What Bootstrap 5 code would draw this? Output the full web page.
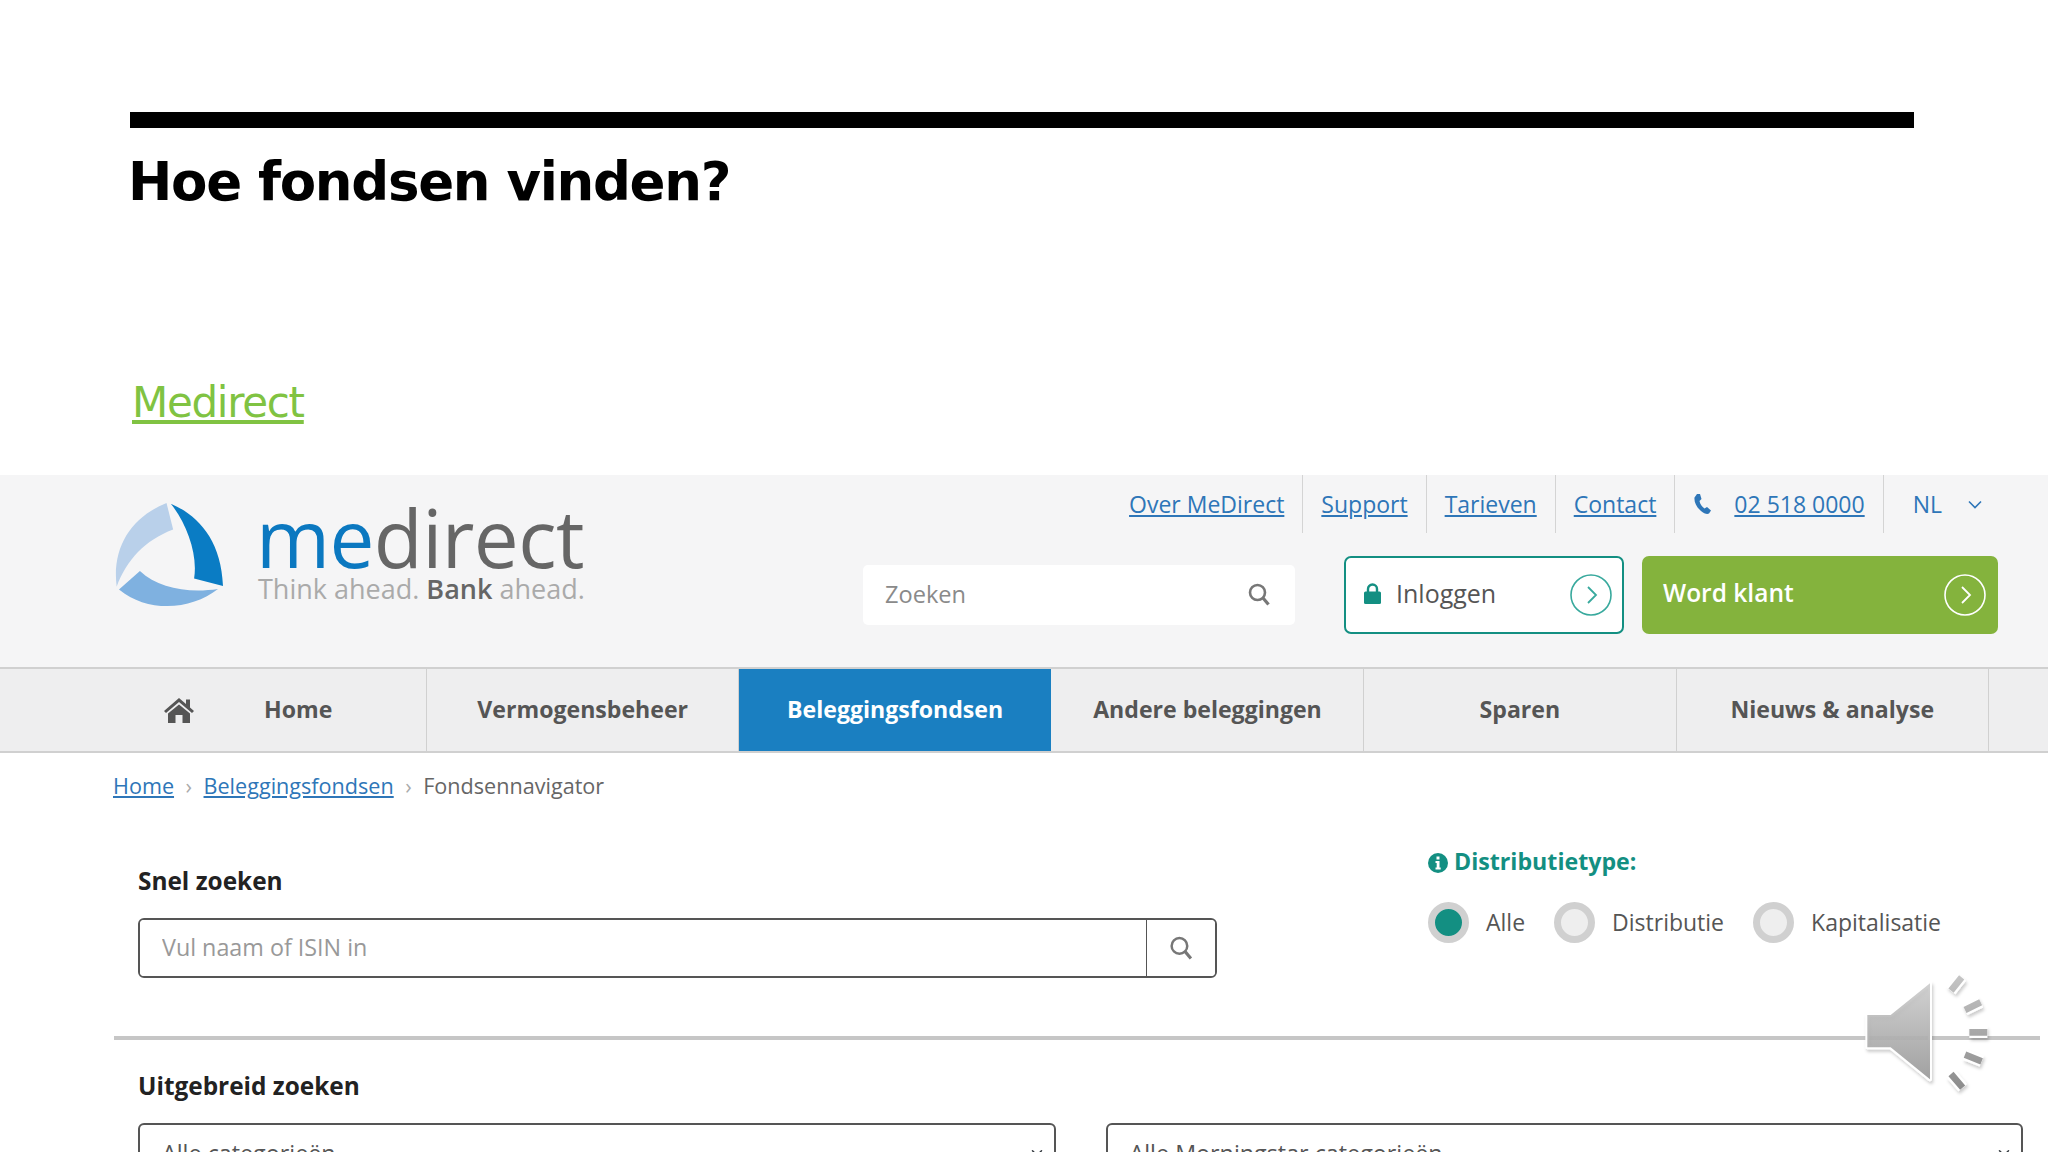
<!DOCTYPE html>
<html lang="nl">
<head>
<meta charset="utf-8">
<title>Hoe fondsen vinden?</title>
<link href="https://cdn.jsdelivr.net/npm/bootstrap@5.3.0/dist/css/bootstrap.min.css" rel="stylesheet">
<style>
html,body{height:1152px;overflow:hidden;background:#fff}
body{font-family:"Open Sans",sans-serif;color:#555;position:relative}
a{color:#2e76b8}
.slide-top{height:475px;padding:112px 0 0 130px}
.slide-bar{width:1784px;height:16px;background:#000}
.slide-title{font:700 53px/1 "DejaVu Sans",sans-serif;letter-spacing:-1.3px;color:#000;margin:27px 0 0 -2px}
.slide-link{display:inline-block;font:400 42px/1 "DejaVu Sans",sans-serif;letter-spacing:-1.3px;color:#80c342;margin:174px 0 0 2px}
.site-head{height:192px;background:#f5f5f6;padding:0 50px 0 113px}
.logo-mark{width:112px;height:108px;margin-top:26px}
.logo-box{margin-left:33px;margin-top:20px;width:336px}
.logo-word{font-size:80px;font-weight:500;line-height:84px;letter-spacing:-.6px;color:#666;white-space:nowrap;margin-left:-2px}
.logo-word span{color:#0b78c0}
.logo-tag{font-size:27px;line-height:24px;color:#aaa;white-space:nowrap;margin-top:-2px}
.logo-tag b{font-weight:600;color:#666}
.top-links{height:58px;font-size:23px}
.top-links>*{padding:0 18px;border-right:1px solid #d4d4d4;height:58px;line-height:58px;display:flex;align-items:center}
.top-links>:last-child{border:0;padding:0 16px 0 29px;color:#2e76b8}
.top-icon{width:19px;height:22px;margin-right:22px}
.chev{width:14px;height:9px;margin-left:26px}
.action-row{margin-top:23px;height:78px}
.find-box{width:432px;height:60px;background:#fff;border-radius:5px;padding:0 25px 0 22px;font-size:23.6px;color:#8a8a8a;margin-right:49px}
.cta{height:78px;border-radius:7px;font-size:24.5px;font-weight:600;text-align:left;padding:0 12px 3px 21px;display:flex;align-items:center}
.cta-login{width:280px;background:#fff;border:2px solid #138f82;color:#555;margin-right:18px;font-weight:400;padding-left:18px;padding-right:10px;font-size:25px}
.cta-login:hover{background:#fff;border-color:#138f82;color:#555}
.cta-new{width:356px;background:#84b33d;border:0;color:#fff}
.cta-new:hover{background:#84b33d;color:#fff}
.ring{width:42px;height:42px;margin-left:auto;margin-bottom:-3px}
.lock-ic{width:17px;height:21px;margin-right:15px}
.main-nav{height:86px;background:#eeeeef;border-top:2px solid #d0d0d0;border-bottom:2px solid #d0d0d0;flex-wrap:nowrap}
.main-nav .nav-link{width:312.4px;height:82px;display:flex;align-items:center;justify-content:center;color:#555;font-size:23.1px;font-weight:700;border-right:1px solid #d0d0d0;padding:0 0 1px;border-radius:0}
.main-nav .nav-link.active{background:#1a7fc1;color:#fff;border-right-color:#eeeeef}
.main-nav .home-cell{width:427px;justify-content:flex-start;padding-left:164px}
.home-ic{width:30px;height:26px;margin-right:70px}
.crumbs{padding:18px 0 0 113px;font-size:21.6px;line-height:30px}
.crumbs .breadcrumb{margin:0}
.crumbs .breadcrumb-item+.breadcrumb-item{padding-left:11.5px}
.crumbs .breadcrumb-item+.breadcrumb-item::before{content:"›";color:#aaa;padding-right:11.5px}
.crumbs .active{color:#666}
.quick-row{padding:45px 0 0 138px}
.quick-left{width:1079px;padding-top:20px}
.sec-title{font-size:24.4px;font-weight:700;line-height:30px;color:#222;margin:0}
.quick-group{margin-top:22px;height:60px;border:2px solid #555;border-radius:6px;overflow:hidden;background:#fff;flex-wrap:nowrap}
.quick-group .form-control{border:0;border-radius:0;font-size:23.3px;color:#555;padding:0 22px 2px;height:56px;box-shadow:none}
.form-control::placeholder{color:#999}
.quick-btn{width:69px;border:0;border-left:1px solid #555;border-radius:0;padding:0;background:#fff}
.quick-right{margin-left:211px}
.dist-title{font-size:23.2px;font-weight:700;line-height:30px;color:#138f82}
.dist-title svg{width:20px;height:20px;margin-right:6px;vertical-align:-3px}
.dist-opts{margin-top:26px;font-size:23px;color:#555}
.dist-opts .form-check{margin:0;padding:0;min-height:0;display:flex;align-items:center}
.dist-opts .form-check-input{width:41px;height:41px;margin:0 17px 0 0;float:none;background:#eee;background-image:none;border:7px solid #d0d0d0;box-shadow:none}
.dist-opts .form-check-input:checked{background:#138f82;background-image:none;border-color:#d0d0d0}
.dist-opts .form-check-label{line-height:41px}
.dist-opts .form-check+.form-check{margin-left:29px}
.rule{height:4px;background:#c6c6c6;margin:58px 8px 0 114px;opacity:1;border:0}
.more-wrap{padding:31px 25px 0 138px}
.more-selects{margin-top:22px;gap:50px}
.more-selects .form-select{width:918px;height:60px;border:2px solid #555;border-radius:6px;font-size:23.3px;color:#555;padding:6px 22px;background-position:right 9px center;background-size:16px 12px}
.speaker{position:absolute;left:1850px;top:960px;width:170px;height:150px}
</style>
</head>
<body>
<section class="slide-top">
  <div class="slide-bar"></div>
  <h1 class="slide-title">Hoe fondsen vinden?</h1>
  <a class="slide-link" href="#">Medirect</a>
</section>

<header class="site-head d-flex">
  <svg class="logo-mark flex-shrink-0" viewBox="35 32 335 325" aria-label="MeDirect logo">
    <path fill="#b9d0ea" d="M195 38 L215 118 C130 150 75 210 45 290 C30 170 90 80 195 38Z"/>
    <path fill="#0a7cc4" d="M208 40 C290 75 360 150 365 288 L278 265 C290 190 255 100 208 40Z"/>
    <path fill="#7fb1e0" d="M52 298 L115 243 C170 295 260 310 350 297 C270 360 140 370 52 298Z"/>
  </svg>
  <div class="logo-box flex-shrink-0">
    <div class="logo-word"><span>me</span>direct</div>
    <div class="logo-tag">Think ahead. <b>Bank</b> ahead.</div>
  </div>
  <div class="ms-auto">
    <div class="top-links d-flex justify-content-end">
      <a href="#">Over MeDirect</a>
      <a href="#">Support</a>
      <a href="#">Tarieven</a>
      <a href="#">Contact</a>
      <div>
        <svg class="top-icon" viewBox="0 0 19 22"><path fill="#2e76b8" d="M4 1 L7 1 L8.5 6 L6.5 8 C7 11 9 14 11.5 15.5 L14 14 L18 17.5 L16 20.5 C14 21.5 11 20.5 8 18 C3.5 14 1 9 1.5 4.5Z"/></svg>
        <a href="#">02 518 0000</a>
      </div>
      <div>NL
        <svg class="chev" viewBox="0 0 14 9"><path fill="none" stroke="#2e76b8" stroke-width="1.6" d="M1 1.5 L7 7.5 L13 1.5"/></svg>
      </div>
    </div>
    <div class="action-row d-flex align-items-center justify-content-end">
      <div class="find-box d-flex align-items-center justify-content-between">
        <span>Zoeken</span>
        <svg width="22" height="24" viewBox="0 0 22 24"><circle cx="9.5" cy="9.5" r="7.5" fill="none" stroke="#777" stroke-width="2.6"/><path stroke="#777" stroke-width="3.2" d="M15 15 L20.5 21.5"/></svg>
      </div>
      <button type="button" class="btn cta cta-login">
        <svg class="lock-ic" viewBox="0 0 17 21"><path fill="none" stroke="#138f82" stroke-width="2.4" d="M4 9 V6 a4.5 4.5 0 0 1 9 0 V9"/><rect y="8.5" width="17" height="12.5" rx="1.5" fill="#138f82"/></svg>
        Inloggen
        <svg class="ring" viewBox="0 0 42 42"><circle cx="21" cy="21" r="20" fill="none" stroke="#38a99d" stroke-width="1.6"/><path fill="none" stroke="#38a99d" stroke-width="1.8" d="M18 13 L26 21 L18 29"/></svg>
      </button>
      <button type="button" class="btn cta cta-new">
        Word klant
        <svg class="ring" viewBox="0 0 42 42"><circle cx="21" cy="21" r="20" fill="none" stroke="#fff" stroke-width="1.6"/><path fill="none" stroke="#fff" stroke-width="1.8" d="M18 13 L26 21 L18 29"/></svg>
      </button>
    </div>
  </div>
</header>

<nav class="nav main-nav">
  <a class="nav-link home-cell" href="#">
    <svg class="home-ic" viewBox="0 0 30 26"><path fill="#555" d="M15 1 L22 7 V2.5 H26 V10.5 L30 14 L28 16 L15 5 L2 16 L0 14Z"/><path fill="#555" d="M15 7.5 L26 16.5 V26 H18.5 V18 H11.5 V26 H4 V16.5Z"/></svg>
    Home
  </a>
  <a class="nav-link" href="#">Vermogensbeheer</a>
  <a class="nav-link active" href="#">Beleggingsfondsen</a>
  <a class="nav-link" href="#">Andere beleggingen</a>
  <a class="nav-link" href="#">Sparen</a>
  <a class="nav-link" href="#">Nieuws &amp; analyse</a>
</nav>

<div class="crumbs">
  <ol class="breadcrumb">
    <li class="breadcrumb-item"><a href="#">Home</a></li>
    <li class="breadcrumb-item"><a href="#">Beleggingsfondsen</a></li>
    <li class="breadcrumb-item active">Fondsennavigator</li>
  </ol>
</div>

<div class="quick-row d-flex">
  <div class="quick-left flex-shrink-0">
    <h2 class="sec-title">Snel zoeken</h2>
    <div class="input-group quick-group">
      <input class="form-control" type="text" placeholder="Vul naam of ISIN in">
      <button class="btn quick-btn" type="button" aria-label="Zoeken">
        <svg width="24" height="25" viewBox="0 0 22 24"><circle cx="9.5" cy="9.5" r="7.5" fill="none" stroke="#777" stroke-width="2.4"/><path stroke="#777" stroke-width="3" d="M15 15 L20.5 21.5"/></svg>
      </button>
    </div>
  </div>
  <div class="quick-right">
    <div class="dist-title">
      <svg viewBox="0 0 20 20"><circle cx="10" cy="10" r="10" fill="#138f82"/><path fill="#fff" d="M8.5 3.5h3v3h-3zM7.5 8h4v6.5h1.2V16.5H7.5v-2h1.2V10H7.5z"/></svg>Distributietype:
    </div>
    <div class="dist-opts d-flex">
      <div class="form-check"><input class="form-check-input" type="radio" name="dist" id="d1" checked><label class="form-check-label" for="d1">Alle</label></div>
      <div class="form-check"><input class="form-check-input" type="radio" name="dist" id="d2"><label class="form-check-label" for="d2">Distributie</label></div>
      <div class="form-check"><input class="form-check-input" type="radio" name="dist" id="d3"><label class="form-check-label" for="d3">Kapitalisatie</label></div>
    </div>
  </div>
</div>

<hr class="rule">

<div class="more-wrap">
  <h2 class="sec-title">Uitgebreid zoeken</h2>
  <div class="more-selects d-flex">
    <select class="form-select"><option>Alle categorieën</option></select>
    <select class="form-select"><option>Alle Morningstar categorieën</option></select>
  </div>
</div>

<svg class="speaker" viewBox="0 0 510 450" aria-label="Audio">
  <defs>
    <linearGradient id="spk" x1="0" y1="0" x2="0" y2="1"><stop offset="0" stop-color="#cdcdcd"/><stop offset="1" stop-color="#999"/></linearGradient>
    <linearGradient id="spd" gradientUnits="userSpaceOnUse" x1="0" y1="50" x2="0" y2="385"><stop offset="0" stop-color="#c4c4c4"/><stop offset="1" stop-color="#8c8c8c"/></linearGradient>
    <filter id="spks" x="-20%" y="-20%" width="140%" height="140%"><feDropShadow dx="4" dy="8" stdDeviation="5" flood-color="#000" flood-opacity=".2"/></filter>
  </defs>
  <g filter="url(#spks)" fill="none" stroke="#fff" stroke-width="34" stroke-linejoin="round">
    <path stroke-width="12" d="M52 165 H122 L240 70 V358 L122 262 H52Z"/>
    <path d="M303 92 L335 52M345 150 L392 127M358 217 H412M345 284 L395 304M303 342 L338 383"/>
  </g>
  <path fill="url(#spk)" fill-opacity=".92" d="M52 165 H122 L240 70 V358 L122 262 H52Z"/>
  <path fill="none" stroke="url(#spd)" stroke-width="20" d="M303 92 L335 52M345 150 L392 127M358 217 H412M345 284 L395 304M303 342 L338 383"/>
</svg>
<script src="https://cdn.jsdelivr.net/npm/bootstrap@5.3.0/dist/js/bootstrap.bundle.min.js"></script>
</body>
</html>
